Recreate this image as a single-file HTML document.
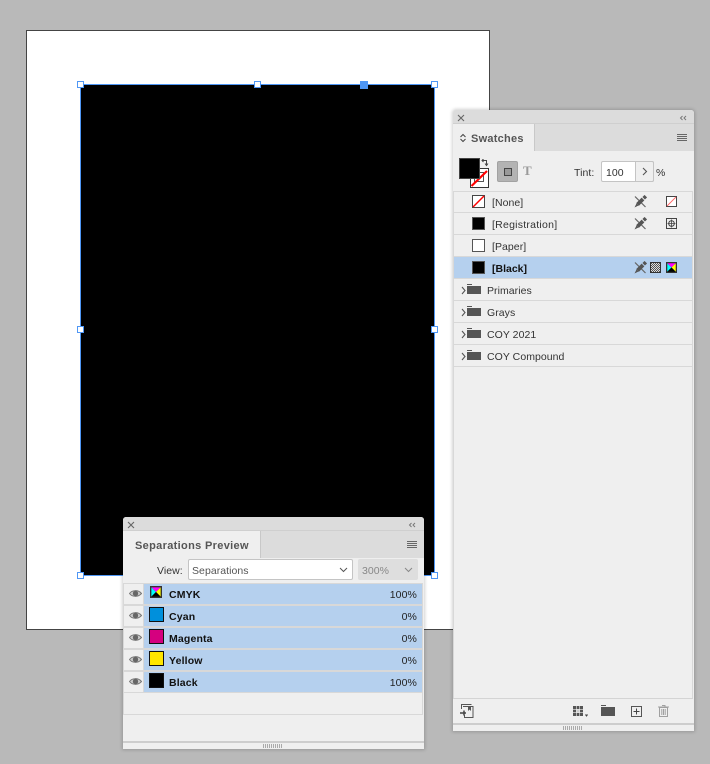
<!DOCTYPE html>
<html><head><meta charset="utf-8"><style>
html,body{margin:0;padding:0}
body{width:710px;height:764px;background:#b9b9b9;position:relative;overflow:hidden;font-family:"Liberation Sans",sans-serif;font-size:10.5px;color:#333}
div,svg,span{position:absolute;box-sizing:border-box}
.t{white-space:nowrap;letter-spacing:.05px;line-height:13px;margin-top:1px}
.h{width:7px;height:7px;background:#fff;border:1px solid #4f97f5}
.panel{background:#efefef;border-radius:3px 3px 0 0;box-shadow:0 0 3px 1px rgba(0,0,0,.18)}
.line{background:#d8d8d8;height:1px}
.b{font-weight:bold;color:#111;letter-spacing:.15px}
.n{font-weight:normal;color:#222;letter-spacing:.1px}
</style></head><body>
<div style="left:26px;top:30px;width:464px;height:600px;background:#fff;border:1px solid #444"></div>
<div style="left:80px;top:84px;width:355px;height:492px;background:#000;border:1px solid #4f97f5"></div>
<div class="h" style="left:77px;top:81px"></div>
<div class="h" style="left:254px;top:81px"></div>
<div class="h" style="left:431px;top:81px"></div>
<div class="h" style="left:77px;top:326px"></div>
<div class="h" style="left:431px;top:326px"></div>
<div class="h" style="left:77px;top:572px"></div>
<div class="h" style="left:431px;top:572px"></div>
<div style="left:360px;top:81px;width:8px;height:8px;background:#4f97f5"></div>

<!-- Swatches -->
<div class="panel" style="left:453px;top:110px;width:241px;height:621px"></div>
<div style="left:453px;top:110px;width:241px;height:14px;background:#dcdcdc;border-radius:3px 3px 0 0;border-bottom:1px solid #cfcfcf"></div>
<svg style="left:453px;top:110px" width="241" height="14"><path d="M5 5l6 6M11 5l-6 6" stroke="#666" stroke-width="1.100" fill="none"/><path d="M229.500 6l-2 2 2 2M233 6l-2 2 2 2" stroke="#777" fill="none"/></svg>
<div style="left:453px;top:124px;width:241px;height:27px;background:#dcdcdc"></div>
<div style="left:453px;top:124px;width:82px;height:27px;background:#efefef;border-right:1px solid #c8c8c8"></div>
<svg style="left:459px;top:133px" width="8" height="10"><path d="M1.500 4L4 1.500 6.500 4M1.500 6L4 8.500 6.500 6" stroke="#444" fill="none"/></svg>
<div class="t" style="left:471px;top:132px;font-weight:bold;color:#555;font-size:11px;letter-spacing:.25px">Swatches</div>
<svg style="left:677px;top:133px" width="11" height="9"><path d="M0 1.500h10M0 3.500h10M0 5.500h10M0 7.500h10" stroke="#666" stroke-width=".9"/></svg>

<!-- fill stroke -->
<div style="left:470px;top:168px;width:19px;height:20px;background:#fff;border:1px solid #333"></div>
<div style="left:474px;top:172px;width:10px;height:10px;border:1px solid #555"></div>
<svg style="left:470px;top:168px" width="19" height="20"><path d="M1.500 18L17 3" stroke="#f00" stroke-width="2.200"/></svg>
<div style="left:459px;top:158px;width:21px;height:21px;background:#000;border:1px solid #444"></div>
<svg style="left:481px;top:159px" width="8" height="8"><path d="M1 1.500h4.500v4M4 4.500l1.500 2 1.500-2M2.500 0L1 1.500 2.500 3" stroke="#444" fill="none"/></svg>
<div style="left:497px;top:161px;width:21px;height:21px;background:#b3b3b3;border:1px solid #a2a2a2;border-radius:2px"></div>
<div style="left:504px;top:168px;width:8px;height:8px;background:#999;border:1px solid #444"></div>
<div style="left:523px;top:164px;font:bold 13px 'Liberation Serif',serif;color:#9a9a9a;line-height:14px">T</div>
<div class="t" style="left:574px;top:166px;color:#333">Tint:</div>
<div style="left:601px;top:161px;width:53px;height:21px;background:#fff;border:1px solid #c4c4c4;border-radius:2px"></div>
<div class="t" style="left:606px;top:166px;color:#333">100</div>
<div style="left:635px;top:161px;width:19px;height:21px;background:#efefef;border:1px solid #c4c4c4;border-radius:0 2px 2px 0"></div>
<svg style="left:642px;top:167px" width="6" height="9"><path d="M1 1l3.500 3.500L1 8" stroke="#555" stroke-width="1.100" fill="none"/></svg>
<div class="t" style="left:656px;top:166px;color:#333">%</div>

<!-- swatch list -->
<div style="left:453px;top:191px;width:240px;height:507px;background:#efefef;border:1px solid #d8d8d8;border-width:1px 1px 0 1px"></div>
<div class="line" style="left:454px;top:212px;width:238px"></div>
<div class="line" style="left:454px;top:234px;width:238px"></div>
<div class="line" style="left:454px;top:256px;width:238px"></div>
<div style="left:454px;top:257px;width:238px;height:21px;background:#b5d0ee"></div>
<div class="line" style="left:454px;top:278px;width:238px"></div>
<div class="line" style="left:454px;top:300px;width:238px"></div>
<div class="line" style="left:454px;top:322px;width:238px"></div>
<div class="line" style="left:454px;top:344px;width:238px"></div>
<div class="line" style="left:454px;top:366px;width:238px"></div>

<div style="left:472px;top:195px;width:13px;height:13px;background:#fff;border:1px solid #444"></div>
<svg style="left:472px;top:195px" width="13" height="13"><path d="M1 12L12 1" stroke="#f00" stroke-width="1.500"/></svg>
<div class="t" style="left:492px;top:196px">[None]</div>
<div style="left:472px;top:217px;width:13px;height:13px;background:#000;border:1px solid #555"></div>
<div class="t" style="left:492px;top:218px;letter-spacing:.25px">[Registration]</div>
<div style="left:472px;top:239px;width:13px;height:13px;background:#fff;border:1px solid #555"></div>
<div class="t" style="left:492px;top:240px">[Paper]</div>
<div style="left:472px;top:261px;width:13px;height:13px;background:#000;border:1px solid #555"></div>
<div class="t b" style="left:492px;top:262px;letter-spacing:0">[Black]</div>

<svg width="0" height="0" style="left:0;top:0"><defs>
<g id="pen"><path d="M1 1.500L11.500 12" stroke="#666" stroke-width="1.200"/><path d="M9 4L3.500 9.500" stroke="#555" stroke-width="3.800"/><path d="M2.500 8.500L.5 12.500 4.500 10.500z" fill="#555"/><path d="M9.500 1l2.500 2.500" stroke="#555" stroke-width="3"/></g>
<g id="cmyk"><rect x="0" y="0" width="13" height="13" fill="#333"/><path d="M1.500 1.500h10L6.500 6.500z" fill="#f0f"/><path d="M1.500 1.500v10L6.500 6.500z" fill="#0ff"/><path d="M11.500 1.500v10L6.500 6.500z" fill="#ff0"/><path d="M1.500 11.500h10L6.500 6.500z" fill="#000"/></g>
<g id="folder"><rect x="0" y="0" width="5" height="1" fill="#555"/><rect x="0" y="2" width="14" height="8" fill="#555"/></g>
<g id="eye"><path d="M.5 4.500C3 1 9 .500 12.500 4.500 9 8.500 3 8 .5 4.500z" fill="#ccc" stroke="#777"/><circle cx="6.500" cy="4.500" r="2.700" fill="#666"/></g>
<g id="chev"><path d="M1 1l3 3.500L1 8" stroke="#555" stroke-width="1.100" fill="none"/></g>
</defs></svg>
<svg style="left:634px;top:195px" width="13" height="13"><use href="#pen"/></svg>
<svg style="left:634px;top:217px" width="13" height="13"><use href="#pen"/></svg>
<svg style="left:634px;top:261px" width="13" height="13"><use href="#pen"/></svg>
<svg style="left:666px;top:196px" width="11" height="11"><rect x=".5" y=".5" width="10" height="10" fill="#fff" stroke="#444"/><path d="M1 10L10 1" stroke="#f66" stroke-width=".9"/></svg>
<svg style="left:666px;top:218px" width="11" height="11"><rect x=".5" y=".5" width="10" height="10" fill="none" stroke="#444"/><circle cx="5.500" cy="5.500" r="2.800" fill="none" stroke="#444"/><path d="M5.500 1.500v8M1.500 5.500h8" stroke="#444" stroke-width=".8"/></svg>
<svg style="left:650px;top:262px" width="11" height="11"><defs><pattern id="ck" width="2" height="2" patternUnits="userSpaceOnUse"><rect width="2" height="2" fill="#ddd"/><rect width="1" height="1" fill="#555"/><rect x="1" y="1" width="1" height="1" fill="#555"/></pattern></defs><rect x=".5" y=".5" width="10" height="10" fill="url(#ck)" stroke="#333"/></svg>
<svg style="left:666px;top:262px" width="11" height="11" viewBox="0 0 13 13"><use href="#cmyk"/></svg>

<svg style="left:461px;top:286px" width="6" height="10"><use href="#chev"/></svg><svg style="left:467px;top:284px" width="15" height="11"><use href="#folder"/></svg><div class="t" style="left:487px;top:284px">Primaries</div>
<svg style="left:461px;top:308px" width="6" height="10"><use href="#chev"/></svg><svg style="left:467px;top:306px" width="15" height="11"><use href="#folder"/></svg><div class="t" style="left:487px;top:306px">Grays</div>
<svg style="left:461px;top:330px" width="6" height="10"><use href="#chev"/></svg><svg style="left:467px;top:328px" width="15" height="11"><use href="#folder"/></svg><div class="t" style="left:487px;top:328px">COY 2021</div>
<svg style="left:461px;top:352px" width="6" height="10"><use href="#chev"/></svg><svg style="left:467px;top:350px" width="15" height="11"><use href="#folder"/></svg><div class="t" style="left:487px;top:350px">COY Compound</div>

<div class="line" style="left:453px;top:698px;width:240px;background:#d4d4d4"></div>
<svg style="left:460px;top:704px" width="14" height="15"><path d="M1.500 5V.5h10M3.500 3V2.500h9.500v11H4.500V11" stroke="#555" fill="none"/><path d="M8 2h3v5L9.500 5.500 8 7z" fill="#555"/><path d="M0 9h6M4 6.500v5" stroke="#444" stroke-width="1.500"/></svg>
<svg style="left:573px;top:706px" width="16" height="14"><rect x="0" y="0" width="10" height="10" fill="#555"/><path d="M3.300 0v10M6.700 0v10M0 3.300h10M0 6.700h10" stroke="#efefef" stroke-width=".6"/><rect x="3.500" y="3.500" width="3" height="3" fill="#ccc"/><rect x="12" y="8.500" width="3" height="1" fill="#444"/><rect x="13" y="9.500" width="1" height="1" fill="#444"/></svg>
<svg style="left:601px;top:705px" width="14" height="12"><rect x="0" y="0" width="5" height="1" fill="#555"/><rect x="0" y="2" width="14" height="9" fill="#555"/></svg>
<svg style="left:631px;top:706px" width="11" height="11"><rect x=".5" y=".5" width="10" height="10" fill="none" stroke="#555"/><path d="M5.500 2.500v6M2.500 5.500h6" stroke="#444"/></svg>
<svg style="left:658px;top:705px" width="11" height="12"><path d="M1.500 2.500h8v9h-8zM0 2h11M4 .5h3v1.500M3.800 4v6M5.500 4v6M7.200 4v6" stroke="#a0a0a0" fill="none"/></svg>
<div style="left:453px;top:723px;width:241px;height:2px;background:#cdcdcd"></div>
<div style="left:563px;top:726px;width:20px;height:4px;background:repeating-linear-gradient(90deg,#aaa 0 1px,transparent 1px 2px)"></div>

<!-- Separations -->
<div class="panel" style="left:123px;top:517px;width:301px;height:232px"></div>
<div style="left:123px;top:517px;width:301px;height:14px;background:#dcdcdc;border-radius:3px 3px 0 0;border-bottom:1px solid #cfcfcf"></div>
<svg style="left:123px;top:517px" width="301" height="14"><path d="M5 5l6 6M11 5l-6 6" stroke="#666" stroke-width="1.100" fill="none"/><path d="M288.500 6l-2 2 2 2M292 6l-2 2 2 2" stroke="#777" fill="none"/></svg>
<div style="left:123px;top:531px;width:301px;height:27px;background:#dcdcdc"></div>
<div style="left:123px;top:531px;width:138px;height:27px;background:#efefef;border-right:1px solid #c8c8c8"></div>
<div class="t" style="left:135px;top:539px;font-weight:bold;color:#555;font-size:11px;letter-spacing:.33px">Separations Preview</div>
<svg style="left:407px;top:540px" width="11" height="9"><path d="M0 1.500h10M0 3.500h10M0 5.500h10M0 7.500h10" stroke="#666" stroke-width=".9"/></svg>

<div class="t" style="left:157px;top:564px">View:</div>
<div style="left:188px;top:559px;width:165px;height:21px;background:#fff;border:1px solid #c4c4c4;border-radius:2px"></div>
<div class="t" style="left:192px;top:564px;color:#555">Separations</div>
<svg style="left:339px;top:567px" width="9" height="6"><path d="M1 1l3.500 3.500L8 1" stroke="#555" fill="none"/></svg>
<div style="left:358px;top:559px;width:60px;height:21px;background:#dedede;border-radius:2px"></div>
<div class="t" style="left:362px;top:564px;color:#888">300%</div>
<svg style="left:404px;top:567px" width="9" height="6"><path d="M1 1l3.500 3.500L8 1" stroke="#888" fill="none"/></svg>

<div style="left:123px;top:583px;width:300px;height:132px;border:1px solid #d8d8d8"></div>
<div style="left:144px;top:584px;width:278px;height:20px;background:#b5d0ee"></div>
<div style="left:144px;top:606px;width:278px;height:20px;background:#b5d0ee"></div>
<div style="left:144px;top:628px;width:278px;height:20px;background:#b5d0ee"></div>
<div style="left:144px;top:650px;width:278px;height:20px;background:#b5d0ee"></div>
<div style="left:144px;top:672px;width:278px;height:20px;background:#b5d0ee"></div>
<div class="line" style="left:124px;top:604px;width:298px;height:2px"></div>
<div class="line" style="left:124px;top:626px;width:298px;height:2px"></div>
<div class="line" style="left:124px;top:648px;width:298px;height:2px"></div>
<div class="line" style="left:124px;top:670px;width:298px;height:2px"></div>
<div class="line" style="left:124px;top:692px;width:298px"></div>
<div style="left:143px;top:584px;width:1px;height:108px;background:#d8d8d8"></div>

<svg style="left:129px;top:589px" width="13" height="9"><use href="#eye"/></svg>
<svg style="left:129px;top:611px" width="13" height="9"><use href="#eye"/></svg>
<svg style="left:129px;top:633px" width="13" height="9"><use href="#eye"/></svg>
<svg style="left:129px;top:655px" width="13" height="9"><use href="#eye"/></svg>
<svg style="left:129px;top:677px" width="13" height="9"><use href="#eye"/></svg>

<svg style="left:150px;top:586px" width="12" height="12" viewBox="0 0 13 13"><use href="#cmyk"/></svg>
<div style="left:149px;top:607px;width:15px;height:15px;background:#0090dc;border:1px solid #111"></div>
<div style="left:149px;top:629px;width:15px;height:15px;background:#d5007f;border:1px solid #111"></div>
<div style="left:149px;top:651px;width:15px;height:15px;background:#ffe600;border:1px solid #111"></div>
<div style="left:149px;top:673px;width:15px;height:15px;background:#000;border:1px solid #111"></div>

<div class="t b" style="left:169px;top:588px">CMYK</div><div class="t n" style="right:293px;top:588px">100%</div>
<div class="t b" style="left:169px;top:610px">Cyan</div><div class="t n" style="right:293px;top:610px">0%</div>
<div class="t b" style="left:169px;top:632px">Magenta</div><div class="t n" style="right:293px;top:632px">0%</div>
<div class="t b" style="left:169px;top:654px">Yellow</div><div class="t n" style="right:293px;top:654px">0%</div>
<div class="t b" style="left:169px;top:676px">Black</div><div class="t n" style="right:293px;top:676px">100%</div>

<div style="left:123px;top:741px;width:301px;height:2px;background:#cdcdcd"></div>
<div style="left:263px;top:744px;width:20px;height:4px;background:repeating-linear-gradient(90deg,#aaa 0 1px,transparent 1px 2px)"></div>
</body></html>
